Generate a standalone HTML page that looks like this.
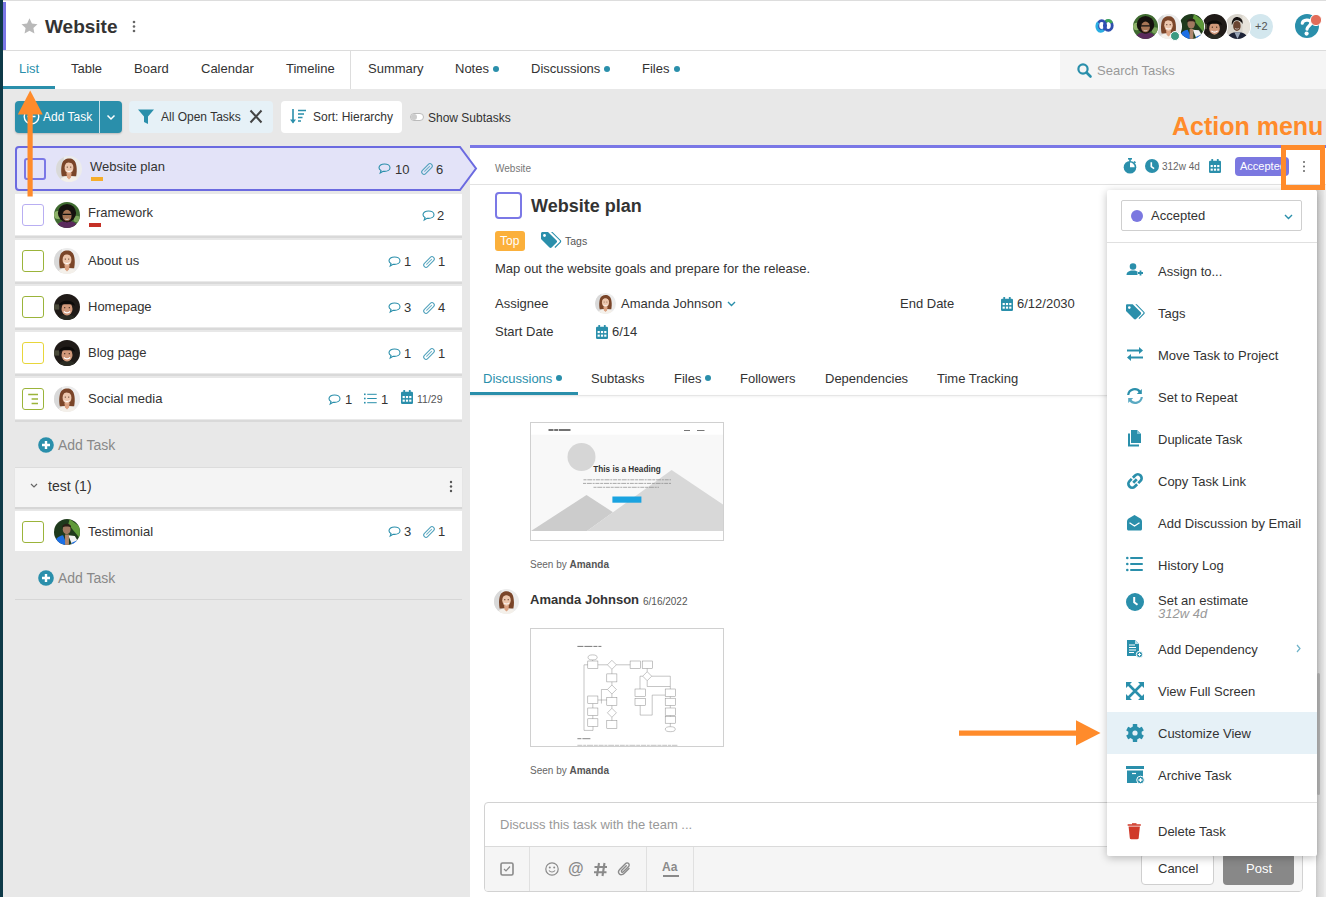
<!DOCTYPE html>
<html><head><meta charset="utf-8">
<style>
*{margin:0;padding:0;box-sizing:border-box}
html,body{width:1326px;height:897px;overflow:hidden;background:#e8e8e8;font-family:"Liberation Sans",sans-serif;color:#333}
.a{position:absolute}
.t{position:absolute;white-space:nowrap;line-height:1}
svg{position:absolute;overflow:visible}
</style></head><body>
<!-- left dark strip -->
<div class="a" style="left:0;top:0;width:3px;height:897px;background:#0e3a48"></div>
<!-- header -->
<div class="a" style="left:3px;top:0;width:1323px;height:51px;background:#fff;border-top:1px solid #ddd;border-bottom:1px solid #dcdcdc"></div>
<div class="a" style="left:3px;top:2px;width:3px;height:48px;background:#7a77e6"></div>
<div class="t" style="left:45px;top:17px;font-size:19px;font-weight:bold;color:#333">Website</div>
<svg style="left:20.5px;top:17.5px" width="17" height="16" viewBox="0 0 24 23"><path d="M12 0.5l3.5 7.4 8 1-5.9 5.5 1.5 8-7.1-3.9-7.1 3.9 1.5-8L0.5 8.9l8-1z" fill="#b9b9b9"/></svg>
<svg style="left:132px;top:20px" width="4" height="13"><circle cx="2" cy="2" r="1.3" fill="#666"/><circle cx="2" cy="6.5" r="1.3" fill="#666"/><circle cx="2" cy="11" r="1.3" fill="#666"/></svg>
<!-- webex logo -->
<svg style="left:1096px;top:19px" width="18" height="13" viewBox="0 0 18 13"><ellipse cx="12.3" cy="6.5" rx="3.9" ry="4.9" fill="none" stroke="#2f4fae" stroke-width="2.9"/><path d="M9.3 3.3A3.9 4.9 0 0 1 15.7 4" fill="none" stroke="#3fa65a" stroke-width="2.9"/><ellipse cx="5.7" cy="6.5" rx="3.9" ry="4.9" fill="none" stroke="#3050b2" stroke-width="2.9"/><path d="M2.2 3.5A3.9 4.9 0 0 0 7.5 11" fill="none" stroke="#2aaee2" stroke-width="2.9"/></svg>
<!-- avatars: in build.py -->
<!-- help -->
<svg style="left:1295px;top:14px" width="27" height="24" viewBox="0 0 27 24"><circle cx="12" cy="12" r="12" fill="#2a8fab"/><path d="M7.3 9.2C8 5.5 15 5 15.8 8.5 16.4 11.4 12.2 12 12 15.2" stroke="#fff" stroke-width="3.2" fill="none" stroke-linecap="round"/><circle cx="11.6" cy="19.6" r="2.1" fill="#fff"/><circle cx="21" cy="6" r="5.6" fill="#e26d5a" stroke="#fff" stroke-width="1"/></svg>

<!-- tabs bar -->
<div class="a" style="left:3px;top:51px;width:1323px;height:38px;background:#fff"></div>
<div class="t" style="left:19px;top:62px;font-size:13px;color:#2a8fab">List</div>
<div class="a" style="left:3px;top:86px;width:52px;height:3px;background:#2a8fab"></div>
<div class="t" style="left:71px;top:62px;font-size:13px">Table</div>
<div class="t" style="left:134px;top:62px;font-size:13px">Board</div>
<div class="t" style="left:201px;top:62px;font-size:13px">Calendar</div>
<div class="t" style="left:286px;top:62px;font-size:13px">Timeline</div>
<div class="a" style="left:350px;top:51px;width:1px;height:38px;background:#ddd"></div>
<div class="t" style="left:368px;top:62px;font-size:13px">Summary</div>
<div class="t" style="left:455px;top:62px;font-size:13px">Notes</div>
<div class="t" style="left:531px;top:62px;font-size:13px">Discussions</div>
<div class="t" style="left:642px;top:62px;font-size:13px">Files</div>
<div class="a" style="left:1060px;top:51px;width:266px;height:38px;background:#f5f5f5"></div>
<div class="t" style="left:1097px;top:64px;font-size:13px;color:#999">Search Tasks</div>

<!-- toolbar -->
<div class="a" style="left:15px;top:101px;width:107px;height:32px;background:#2a8fab;border-radius:4px;box-shadow:0 1px 2px rgba(0,0,0,.2)"></div>
<div class="t" style="left:43px;top:111px;font-size:12px;color:#fff">Add Task</div>
<div class="a" style="left:129px;top:101px;width:144px;height:32px;background:#e6f1f7;border-radius:4px"></div>
<div class="t" style="left:161px;top:111px;font-size:12px">All Open Tasks</div>
<div class="a" style="left:281px;top:101px;width:121px;height:32px;background:#fff;border-radius:4px"></div>
<div class="t" style="left:313px;top:111px;font-size:12px">Sort: Hierarchy</div>
<div class="t" style="left:428px;top:112px;font-size:12px">Show Subtasks</div>

<div class="a" style="left:493px;top:66px;width:6px;height:6px;background:#2a8fab;border-radius:50%"></div>
<div class="a" style="left:604px;top:66px;width:6px;height:6px;background:#2a8fab;border-radius:50%"></div>
<div class="a" style="left:674px;top:66px;width:6px;height:6px;background:#2a8fab;border-radius:50%"></div>
<svg style="left:1077px;top:63px" width="15" height="15" viewBox="0 0 15 15"><circle cx="6" cy="6" r="4.6" fill="none" stroke="#2a8fab" stroke-width="2.2"/><path d="M9.5 9.5l4 4" stroke="#2a8fab" stroke-width="2.6" stroke-linecap="round"/></svg>
<div class="a" style="left:1248px;top:14px;width:25px;height:25px;background:#d3e7ee;border-radius:50%"></div>
<div class="t" style="left:1255px;top:21px;font-size:11px;color:#555;font-weight:normal;">+2</div>
<div class="a" style="left:1224px;top:13px;width:27px;height:27px;background:#fff;border-radius:50%"></div>
<svg style="left:1225px;top:14px" width="25" height="25" viewBox="0 0 40 40"><defs><clipPath id="c1225_14"><circle cx="20" cy="20" r="20"/></clipPath></defs><g clip-path="url(#c1225_14)"><rect width="40" height="40" fill="#d8d4cc"/>
<path d="M28 0h12v40H28z" fill="#e8e4dc"/>
<path d="M3 40c2-8 8-11 17-11s15 3 17 11z" fill="#1f2438"/>
<path d="M15 29l5 11 5-11z" fill="#9aa6b8"/>
<ellipse cx="19" cy="19" rx="6" ry="8" fill="#6a4432"/>
<path d="M11 18c-1-10 5-14 10-13 6 1 8 6 7 11-2-4-5-6-9-6s-6 3-8 8z" fill="#141010"/>
<path d="M16 23c2 1.5 4.5 1.5 6 0" stroke="#eee" stroke-width="1" fill="none"/></g></svg>
<div class="a" style="left:1201px;top:13px;width:27px;height:27px;background:#fff;border-radius:50%"></div>
<svg style="left:1202px;top:14px" width="25" height="25" viewBox="0 0 40 40"><defs><clipPath id="c1202_14"><circle cx="20" cy="20" r="20"/></clipPath></defs><g clip-path="url(#c1202_14)"><rect width="40" height="40" fill="#1f1a17"/>
<rect x="0" y="16" width="8" height="8" fill="#4a4a3a"/>
<path d="M5 40c2-6 8-8 15-8s13 2 15 8z" fill="#2a2a22"/>
<ellipse cx="20" cy="23" rx="8.5" ry="10" fill="#d0987a"/>
<path d="M8 18c0-10 24-10 24 0c-5-3-19-3-24 0z" fill="#0c0a09"/>
<path d="M15 27c2.8 2.5 7.2 2.5 10 0" stroke="#fff" stroke-width="2" fill="none"/>
<circle cx="16.5" cy="21" r=".9" fill="#2a1a10"/><circle cx="23.5" cy="21" r=".9" fill="#2a1a10"/></g></svg>
<div class="a" style="left:1178px;top:13px;width:27px;height:27px;background:#fff;border-radius:50%"></div>
<svg style="left:1179px;top:14px" width="25" height="25" viewBox="0 0 40 40"><defs><clipPath id="c1179_14"><circle cx="20" cy="20" r="20"/></clipPath></defs><g clip-path="url(#c1179_14)"><rect width="40" height="40" fill="#1f3a1c"/>
<path d="M24 0l16 12v18L22 8z" fill="#5f9a3a"/>
<path d="M0 40c1-10 7-14 14-15l6 15z" fill="#1d6fe4"/>
<path d="M22 25l10 1 6 10-10 4z" fill="#f2f2f2"/>
<path d="M28 36l10-4v8H26z" fill="#1d6fe4"/>
<path d="M17 24h6v16h-6z" fill="#b0876d"/>
<ellipse cx="19.5" cy="16" rx="6" ry="7.5" fill="#a07860"/>
<path d="M12.5 13c0-7 14-8 14 0c-3-2-11-2-14 0z" fill="#2a1e16"/></g></svg>
<div class="a" style="left:1155px;top:13px;width:27px;height:27px;background:#fff;border-radius:50%"></div>
<svg style="left:1156px;top:14px" width="25" height="25" viewBox="0 0 40 40"><defs><clipPath id="c1156_14"><circle cx="20" cy="20" r="20"/></clipPath></defs><g clip-path="url(#c1156_14)"><rect width="40" height="40" fill="#ececec"/>
<rect x="0" y="0" width="12" height="40" fill="#d9d9d9"/>
<path d="M9 31C7 22 8 9 13 6c4-3 11-3 14 0 5 3 6 16 4 25z" fill="#7a4529"/>
<path d="M5 40c1-6 6-9 15-9s14 3 15 9z" fill="#f4f0ea"/>
<path d="M16 26h8l-1 7-3 3-3-3z" fill="#dca383"/>
<ellipse cx="20" cy="18" rx="6.8" ry="9" fill="#ecc6ad"/>
<path d="M13 14c1-6 6-8 9-7s5 3 5 7c-2-3-5-4-8-4s-5 2-6 4z" fill="#7a4529"/>
<path d="M16 22.5c2.3 1.8 5.7 1.8 8 0" stroke="#fff" stroke-width="1.5" fill="none"/>
<circle cx="17.3" cy="17" r=".9" fill="#4a2a1a"/><circle cx="22.7" cy="17" r=".9" fill="#4a2a1a"/></g></svg>
<div class="a" style="left:1170px;top:31px;width:10px;height:10px;background:#3a9a82;border-radius:50%;border:1px solid #fff"></div>
<div class="a" style="left:1132px;top:13px;width:27px;height:27px;background:#fff;border-radius:50%"></div>
<svg style="left:1133px;top:14px" width="25" height="25" viewBox="0 0 40 40"><defs><clipPath id="c1133_14"><circle cx="20" cy="20" r="20"/></clipPath></defs><g clip-path="url(#c1133_14)"><rect width="40" height="40" fill="#3f6a30"/>
<circle cx="6" cy="20" r="6" fill="#8fb26a"/><circle cx="35" cy="26" r="5" fill="#7aa35a"/>
<path d="M3 40c2-8 8-11 17-11s15 3 17 11z" fill="#5a2a5c"/>
<ellipse cx="20" cy="17" rx="14" ry="14" fill="#15110e"/>
<ellipse cx="20" cy="21" rx="7" ry="9" fill="#a77555"/>
<path d="M13 19h14" stroke="#111" stroke-width="2"/>
<path d="M14 26c2 4 10 4 12 0v3c-2 3-10 3-12 0z" fill="#2a1d16"/>
<path d="M17 26c1.5 1 4.5 1 6 0" stroke="#eee" stroke-width="1.1" fill="none"/></g></svg>
<div class="a" style="left:99px;top:101px;width:1px;height:32px;background:#bfe0ea"></div>
<svg style="left:23px;top:108px" width="17" height="17" viewBox="0 0 17 17"><circle cx="8.5" cy="8.5" r="7.3" fill="none" stroke="#fff" stroke-width="1.4"/><path d="M8.5 4.5v8M4.5 8.5h8" stroke="#fff" stroke-width="1.6"/></svg>
<svg style="left:106px;top:114px" width="10" height="7"><path d="M1.5 1.5l3.5 3.5 3.5-3.5" stroke="#fff" stroke-width="1.5" fill="none"/></svg>
<svg style="left:138px;top:109px" width="16" height="16" viewBox="0 0 16 16"><path d="M0 0.5h16L10 7.5V15l-4-2V7.5z" fill="#2a8fab"/></svg>
<svg style="left:249px;top:109px" width="14" height="15" viewBox="0 0 14 15"><path d="M1.5 1.5l11 12M12.5 1.5l-11 12" stroke="#444" stroke-width="2"/></svg>
<svg style="left:290px;top:108px" width="17" height="17" viewBox="0 0 17 17"><path d="M3 1v13.5" stroke="#2a8fab" stroke-width="1.6"/><path d="M0 11.5l3 4 3-4z" fill="#2a8fab"/><path d="M8 2.5h8M8 6h6M8 9.5h4.5M8 13h3" stroke="#2a8fab" stroke-width="1.6"/></svg>
<div class="a" style="left:410px;top:113px;width:14px;height:8px;background:#fff;border:1px solid #bbb;border-radius:4px"></div>
<div class="a" style="left:411px;top:114px;width:6px;height:6px;background:#ccc;border-radius:50%"></div>
<div class="a" style="left:470px;top:145px;width:856px;height:752px;background:#fff"></div>
<div class="a" style="left:470px;top:145px;width:856px;height:3px;background:#7a77e6"></div>
<div class="a" style="left:470px;top:184px;width:856px;height:1px;background:#e2e2e2"></div>
<div class="t" style="left:495px;top:164px;font-size:10px;color:#777;font-weight:normal;">Website</div>
<svg style="left:1123px;top:158px" width="14" height="16" viewBox="0 0 14 16"><rect x="5" y="0" width="4" height="1.6" fill="#2a8fab"/><rect x="6.2" y="1" width="1.6" height="2.5" fill="#2a8fab"/><path d="M11 3.5l1.5 1.3" stroke="#2a8fab" stroke-width="1.6"/><circle cx="7" cy="9.3" r="6.3" fill="#2a8fab"/><path d="M7 9.3V4.6A4.7 4.7 0 0 1 11.7 9.3z" fill="#fff"/></svg>
<svg style="left:1145px;top:159px" width="14" height="14" viewBox="0 0 14 14"><circle cx="7" cy="7" r="7" fill="#2a8fab"/><path d="M6.3 3.2v4.5l2.8 2" stroke="#fff" stroke-width="1.6" fill="none"/></svg>
<div class="t" style="left:1162px;top:162px;font-size:10px;color:#666;font-weight:normal;">312w 4d</div>
<svg style="left:1209px;top:159px" width="12" height="14.0" viewBox="0 0 12 14"><rect x="2.3" y="0" width="1.8" height="3" rx=".5" fill="#2a8fab"/><rect x="7.9" y="0" width="1.8" height="3" rx=".5" fill="#2a8fab"/><rect x="0" y="1.8" width="12" height="12.2" rx="1.2" fill="#2a8fab"/><g fill="#fff"><rect x="1.6" y="6" width="2.2" height="2.1"/><rect x="4.9" y="6" width="2.2" height="2.1"/><rect x="8.2" y="6" width="2.2" height="2.1"/><rect x="1.6" y="9.6" width="2.2" height="2.1"/><rect x="4.9" y="9.6" width="2.2" height="2.1"/><rect x="8.2" y="9.6" width="2.2" height="2.1"/></g></svg>
<div class="a" style="left:1235px;top:157px;width:54px;height:19px;background:#7b78e0;border-radius:4px"></div>
<div class="t" style="left:1240px;top:161px;font-size:11px;color:#fff;font-weight:normal;">Accepted</div>
<svg style="left:1302px;top:160px" width="4" height="13"><circle cx="2" cy="2" r="1" fill="#666"/><circle cx="2" cy="6.5" r="1" fill="#666"/><circle cx="2" cy="11" r="1" fill="#666"/></svg>
<div class="a" style="left:495px;top:192px;width:27px;height:27px;border:2px solid #7b78e6;border-radius:4px"></div>
<div class="t" style="left:531px;top:197px;font-size:18px;color:#333;font-weight:bold;">Website plan</div>
<div class="a" style="left:495px;top:231px;width:30px;height:20px;background:#fbb03b;border-radius:3px"></div>
<div class="t" style="left:500px;top:235px;font-size:12px;color:#fff;font-weight:normal;">Top</div>
<svg style="left:541px;top:232px" width="21" height="17" viewBox="0 0 21 17"><path d="M0 1.5V7l8.5 8.5c.6.6 1.5.6 2.1 0l5-5c.6-.6.6-1.5 0-2.1L7 0H1.5C.7 0 0 .7 0 1.5z" fill="#2a8fab"/><circle cx="3.5" cy="3.5" r="1.4" fill="#fff"/><path d="M10 0h1.5l8.3 8.3c.6.6.6 1.5 0 2.1l-5.5 5.5-.8-.8 5.2-5.2c.4-.4.4-.9 0-1.3z" fill="#2a8fab"/></svg>
<div class="t" style="left:565px;top:236px;font-size:10.5px;color:#555;font-weight:normal;">Tags</div>
<div class="t" style="left:495px;top:262px;font-size:13px;color:#333;font-weight:normal;">Map out the website goals and prepare for the release.</div>
<div class="t" style="left:495px;top:297px;font-size:13px;color:#333;font-weight:normal;">Assignee</div>
<svg style="left:595px;top:293px" width="21" height="21" viewBox="0 0 40 40"><defs><clipPath id="c595_293"><circle cx="20" cy="20" r="20"/></clipPath></defs><g clip-path="url(#c595_293)"><rect width="40" height="40" fill="#ececec"/>
<rect x="0" y="0" width="12" height="40" fill="#d9d9d9"/>
<path d="M9 31C7 22 8 9 13 6c4-3 11-3 14 0 5 3 6 16 4 25z" fill="#7a4529"/>
<path d="M5 40c1-6 6-9 15-9s14 3 15 9z" fill="#f4f0ea"/>
<path d="M16 26h8l-1 7-3 3-3-3z" fill="#dca383"/>
<ellipse cx="20" cy="18" rx="6.8" ry="9" fill="#ecc6ad"/>
<path d="M13 14c1-6 6-8 9-7s5 3 5 7c-2-3-5-4-8-4s-5 2-6 4z" fill="#7a4529"/>
<path d="M16 22.5c2.3 1.8 5.7 1.8 8 0" stroke="#fff" stroke-width="1.5" fill="none"/>
<circle cx="17.3" cy="17" r=".9" fill="#4a2a1a"/><circle cx="22.7" cy="17" r=".9" fill="#4a2a1a"/></g></svg>
<div class="t" style="left:621px;top:297px;font-size:13px;color:#333;font-weight:normal;">Amanda Johnson</div>
<svg style="left:727px;top:301px" width="9" height="6"><path d="M1 1l3.5 3.5L8 1" stroke="#2a8fab" stroke-width="1.4" fill="none"/></svg>
<div class="t" style="left:900px;top:297px;font-size:13px;color:#333;font-weight:normal;">End Date</div>
<svg style="left:1001px;top:297px" width="12" height="14.0" viewBox="0 0 12 14"><rect x="2.3" y="0" width="1.8" height="3" rx=".5" fill="#2a8fab"/><rect x="7.9" y="0" width="1.8" height="3" rx=".5" fill="#2a8fab"/><rect x="0" y="1.8" width="12" height="12.2" rx="1.2" fill="#2a8fab"/><g fill="#fff"><rect x="1.6" y="6" width="2.2" height="2.1"/><rect x="4.9" y="6" width="2.2" height="2.1"/><rect x="8.2" y="6" width="2.2" height="2.1"/><rect x="1.6" y="9.6" width="2.2" height="2.1"/><rect x="4.9" y="9.6" width="2.2" height="2.1"/><rect x="8.2" y="9.6" width="2.2" height="2.1"/></g></svg>
<div class="t" style="left:1017px;top:297px;font-size:13px;color:#333;font-weight:normal;">6/12/2030</div>
<div class="t" style="left:495px;top:325px;font-size:13px;color:#333;font-weight:normal;">Start Date</div>
<svg style="left:596px;top:325px" width="12" height="14.0" viewBox="0 0 12 14"><rect x="2.3" y="0" width="1.8" height="3" rx=".5" fill="#2a8fab"/><rect x="7.9" y="0" width="1.8" height="3" rx=".5" fill="#2a8fab"/><rect x="0" y="1.8" width="12" height="12.2" rx="1.2" fill="#2a8fab"/><g fill="#fff"><rect x="1.6" y="6" width="2.2" height="2.1"/><rect x="4.9" y="6" width="2.2" height="2.1"/><rect x="8.2" y="6" width="2.2" height="2.1"/><rect x="1.6" y="9.6" width="2.2" height="2.1"/><rect x="4.9" y="9.6" width="2.2" height="2.1"/><rect x="8.2" y="9.6" width="2.2" height="2.1"/></g></svg>
<div class="t" style="left:612px;top:325px;font-size:13px;color:#333;font-weight:normal;">6/14</div>
<div class="t" style="left:483px;top:372px;font-size:13px;color:#2a8fab;font-weight:normal;">Discussions</div>
<div class="t" style="left:591px;top:372px;font-size:13px;color:#333;font-weight:normal;">Subtasks</div>
<div class="t" style="left:674px;top:372px;font-size:13px;color:#333;font-weight:normal;">Files</div>
<div class="t" style="left:740px;top:372px;font-size:13px;color:#333;font-weight:normal;">Followers</div>
<div class="t" style="left:825px;top:372px;font-size:13px;color:#333;font-weight:normal;">Dependencies</div>
<div class="t" style="left:937px;top:372px;font-size:13px;color:#333;font-weight:normal;">Time Tracking</div>
<div class="a" style="left:556px;top:375px;width:6px;height:6px;background:#2a8fab;border-radius:50%"></div>
<div class="a" style="left:705px;top:375px;width:6px;height:6px;background:#2a8fab;border-radius:50%"></div>
<div class="a" style="left:470px;top:395px;width:856px;height:1px;background:#e6e6e6;box-shadow:0 1px 2px rgba(0,0,0,.08)"></div>
<div class="a" style="left:470px;top:392px;width:108px;height:3px;background:#2a8fab"></div>
<div class="a" style="left:530px;top:422px;width:194px;height:119px;background:#fff;border:1px solid #d0d0d0"></div>
<svg style="left:531px;top:423px" width="192" height="117" viewBox="0 0 192 117">
<rect x="0" y="11.7" width="192" height="96" fill="#f8f8f8"/>
<path d="M17.5 7h22" stroke="#444" stroke-width="1.6" stroke-dasharray="5 .7 4 .7 12 30"/>
<path d="M153 7.5h6M166 7.5h7.5" stroke="#666" stroke-width=".9"/>
<circle cx="50.5" cy="34" r="14" fill="#d6d6d6"/>
<path d="M0 108L55.5 72L82 89.2L56 108Z" fill="#cccccc"/>
<path d="M56 108L140.6 47L192 81.6V108Z" fill="#d8d8d8"/>
<text x="96" y="48.5" font-size="8.2" font-family="Liberation Sans" font-weight="bold" text-anchor="middle" fill="#333">This is a Heading</text>
<path d="M52.5 56.8h87.5M52 60.4h88M62.5 64.3h65.5" stroke="#888" stroke-width=".7" stroke-dasharray="3 .8 5 .8 2 .8 4 .8"/>
<rect x="81.4" y="73.5" width="29" height="6.2" fill="#1aa3e0"/>
</svg>
<div class="t" style="left:530px;top:560px;font-size:10px;color:#666;font-weight:normal;">Seen by <b style="color:#555">Amanda</b></div>
<svg style="left:494px;top:589px" width="25" height="25" viewBox="0 0 40 40"><defs><clipPath id="c494_589"><circle cx="20" cy="20" r="20"/></clipPath></defs><g clip-path="url(#c494_589)"><rect width="40" height="40" fill="#ececec"/>
<rect x="0" y="0" width="12" height="40" fill="#d9d9d9"/>
<path d="M9 31C7 22 8 9 13 6c4-3 11-3 14 0 5 3 6 16 4 25z" fill="#7a4529"/>
<path d="M5 40c1-6 6-9 15-9s14 3 15 9z" fill="#f4f0ea"/>
<path d="M16 26h8l-1 7-3 3-3-3z" fill="#dca383"/>
<ellipse cx="20" cy="18" rx="6.8" ry="9" fill="#ecc6ad"/>
<path d="M13 14c1-6 6-8 9-7s5 3 5 7c-2-3-5-4-8-4s-5 2-6 4z" fill="#7a4529"/>
<path d="M16 22.5c2.3 1.8 5.7 1.8 8 0" stroke="#fff" stroke-width="1.5" fill="none"/>
<circle cx="17.3" cy="17" r=".9" fill="#4a2a1a"/><circle cx="22.7" cy="17" r=".9" fill="#4a2a1a"/></g></svg>
<div class="t" style="left:530px;top:593px;font-size:13px;color:#333;font-weight:bold;">Amanda Johnson</div>
<div class="t" style="left:643px;top:597px;font-size:10px;color:#555;font-weight:normal;">6/16/2022</div>
<div class="a" style="left:530px;top:628px;width:194px;height:119px;background:#fff;border:1px solid #d0d0d0"></div>
<svg style="left:531px;top:629px" width="192" height="117" viewBox="0 0 192 117" fill="none" stroke="#8a8a8a" stroke-width=".5">
<path d="M46.4 17.4h30" stroke="#555" stroke-width=".8" stroke-dasharray="6 1 8 1 4 1 3"/>
<ellipse cx="61.6" cy="28.4" rx="4.6" ry="2.5"/>
<path d="M61.6 30.9V32"/>
<rect x="56.8" y="32" width="10.1" height="7.6"/>
<path d="M80.9 31.3l4.5 4.5-4.5 4.5-4.5-4.5z"/>
<path d="M66.9 35.8h9.5M85.4 35.8h13.7"/>
<rect x="99.1" y="32" width="10.3" height="7.6"/><rect x="111.2" y="32" width="10.1" height="7.6"/>
<path d="M116.2 39.6v3.1"/><path d="M116.2 42.7l4.5 4.5-4.5 4.5-4.5-4.5z"/>
<path d="M80.9 40.3v4.6"/>
<rect x="75.8" y="44.9" width="10.1" height="8"/><path d="M80.9 52.9v3.1"/>
<path d="M80.9 56l4.5 4.5-4.5 4.5-4.5-4.5z"/><path d="M80.9 65v3.6"/>
<rect x="75.8" y="68.6" width="10.1" height="8"/><path d="M80.9 76.6v2.7"/>
<path d="M80.9 79.3l4.5 4.5-4.5 4.5-4.5-4.5z"/><path d="M80.9 88.3v3.4"/>
<rect x="75.8" y="91.7" width="10.1" height="7.8"/>
<rect x="56.8" y="67" width="10.1" height="7.7"/><rect x="56.8" y="79" width="10.1" height="7.6"/><rect x="56.8" y="89.8" width="10.1" height="7.6"/>
<path d="M61.8 74.7v4.3M61.8 86.6v3.2"/>
<path d="M56.8 35.8H53v65.6h9V97.4"/>
<path d="M76.4 60.5h-6v14M66.9 71h9"/>
<path d="M111.7 47.2H109v12.8M120.7 47.2h18.6V60"/>
<rect x="104" y="60" width="10.3" height="7.6"/><rect x="104" y="69.5" width="10.3" height="7.1"/>
<path d="M109.2 76.6v9.5h12v-20h13"/>
<path d="M116.2 51.7v5.8h23"/>
<rect x="134.2" y="60" width="10.2" height="7.6"/><rect x="134.2" y="69.2" width="10.2" height="7.4"/><rect x="134.2" y="79" width="10.2" height="7.6"/><rect x="134.2" y="87.5" width="10.2" height="6.7"/>
<path d="M139.3 67.6v1.6M139.3 76.6v2.4M139.3 86.6v.9M139.3 94.2v3.5"/>
<ellipse cx="139.3" cy="100.2" rx="5" ry="2.5"/>
<path d="M46.4 109.7h13" stroke="#555" stroke-width=".7" stroke-dasharray="4 1 8"/>
<path d="M46.4 116.3h100" stroke="#999" stroke-width=".6" stroke-dasharray="5 .8 3 .8 6 .8 4 .8"/>
</svg>
<div class="t" style="left:530px;top:766px;font-size:10px;color:#666;font-weight:normal;">Seen by <b style="color:#555">Amanda</b></div>
<div class="a" style="left:484px;top:802px;width:819px;height:90px;background:#fff;border:1px solid #d2d2d2;border-radius:4px"></div>
<div class="a" style="left:485px;top:846px;width:817px;height:45px;background:#f5f5f5;border-top:1px solid #dadada;border-radius:0 0 3px 3px"></div>
<div class="t" style="left:500px;top:818px;font-size:13px;color:#999;font-weight:normal;">Discuss this task with the team ...</div>
<div class="a" style="left:529px;top:847px;width:1px;height:44px;background:#e0e0e0"></div>
<div class="a" style="left:646px;top:847px;width:1px;height:44px;background:#e0e0e0"></div>
<div class="a" style="left:693px;top:847px;width:1px;height:44px;background:#e0e0e0"></div>
<svg style="left:500px;top:862px" width="14" height="14" viewBox="0 0 14 14"><rect x="1" y="1" width="12" height="12" rx="1.5" fill="none" stroke="#8a8a8a" stroke-width="1.6"/><path d="M4 7l2 2 4-4.5" stroke="#8a8a8a" stroke-width="1.2" fill="none"/></svg>
<svg style="left:545px;top:862px" width="14" height="14" viewBox="0 0 14 14"><circle cx="7" cy="7" r="6.2" fill="none" stroke="#8a8a8a" stroke-width="1.2"/><circle cx="4.8" cy="5.5" r="1" fill="#8a8a8a"/><circle cx="9.2" cy="5.5" r="1" fill="#8a8a8a"/><path d="M4 8.5c1.5 2 4.5 2 6 0" stroke="#8a8a8a" stroke-width="1.2" fill="none"/></svg>
<div class="t" style="left:568px;top:861px;font-size:16px;color:#8a8a8a;font-weight:bold;">@</div>
<svg style="left:593px;top:862px" width="15" height="15" viewBox="0 0 15 15"><path d="M6 1L4 14M11.5 1L9.5 14M1.5 5h12.5M1 10.2h12.5" stroke="#8a8a8a" stroke-width="2.1"/></svg>
<svg style="left:618px;top:862px" width="13" height="14" viewBox="0 0 13 14"><path d="M11 6.5L6 11.5c-1.5 1.5-3.5 1.5-4.6.4S.4 8.7 1.9 7.2L7.4 1.7c1-1 2.4-1 3.2-.2s.8 2.2-.2 3.2L5.3 9.8c-.5.5-1.2.5-1.6.1s-.4-1.1.1-1.6L8.3 3.8" stroke="#8a8a8a" stroke-width="1.4" fill="none" stroke-linecap="round"/></svg>
<div class="t" style="left:662px;top:861px;font-size:12px;color:#8a8a8a;font-weight:bold;">Aa</div>
<div class="a" style="left:663px;top:875px;width:16px;height:2px;background:#8a8a8a"></div>
<div class="a" style="left:1141px;top:853px;width:73px;height:32px;background:#fff;border:1px solid #cfcfcf;border-radius:4px"></div>
<div class="t" style="left:1158px;top:862px;font-size:13px;color:#333;font-weight:normal;">Cancel</div>
<div class="a" style="left:1223px;top:853px;width:71px;height:32px;background:#888;border-radius:4px"></div>
<div class="t" style="left:1246px;top:862px;font-size:13px;color:#fff;font-weight:normal;">Post</div>
<div class="a" style="left:1316px;top:190px;width:10px;height:707px;background:linear-gradient(90deg,#c9c9c9 0,#dadada 30%,#e6e6e6 75%,#d4d4d4 78%,#ececec 85%,#efefef 100%)"></div>
<div class="a" style="left:1316px;top:185px;width:10px;height:5px;background:#f4f4f4"></div>
<div class="a" style="left:1317px;top:673px;width:3px;height:122px;background:#b5b5b5;border-radius:2px"></div>
<svg style="left:15px;top:146px" width="463" height="45" viewBox="0 0 463 45"><path d="M4 1H445L461 22.5L445 44H4Q1 44 1 41V4Q1 1 4 1z" fill="#e3e3f8" stroke="#6b6ae0" stroke-width="2"/></svg>
<div class="a" style="left:24px;top:158px;width:22px;height:22px;border:2px solid #7b78e6;border-radius:3px"></div>
<svg style="left:56px;top:156px" width="26" height="26" viewBox="0 0 40 40"><defs><clipPath id="c56_156"><circle cx="20" cy="20" r="20"/></clipPath></defs><g clip-path="url(#c56_156)"><rect width="40" height="40" fill="#ececec"/>
<rect x="0" y="0" width="12" height="40" fill="#d9d9d9"/>
<path d="M9 31C7 22 8 9 13 6c4-3 11-3 14 0 5 3 6 16 4 25z" fill="#7a4529"/>
<path d="M5 40c1-6 6-9 15-9s14 3 15 9z" fill="#f4f0ea"/>
<path d="M16 26h8l-1 7-3 3-3-3z" fill="#dca383"/>
<ellipse cx="20" cy="18" rx="6.8" ry="9" fill="#ecc6ad"/>
<path d="M13 14c1-6 6-8 9-7s5 3 5 7c-2-3-5-4-8-4s-5 2-6 4z" fill="#7a4529"/>
<path d="M16 22.5c2.3 1.8 5.7 1.8 8 0" stroke="#fff" stroke-width="1.5" fill="none"/>
<circle cx="17.3" cy="17" r=".9" fill="#4a2a1a"/><circle cx="22.7" cy="17" r=".9" fill="#4a2a1a"/></g></svg>
<div class="t" style="left:90px;top:160px;font-size:13px;color:#333;font-weight:normal;">Website plan</div>
<div class="a" style="left:91px;top:177px;width:12px;height:4px;background:#f5ad2b"></div>
<svg style="left:378px;top:163px" width="13" height="11" viewBox="0 0 13 11"><path d="M6.5 1C3.4 1 1 2.6 1 4.7c0 1.2.8 2.2 2 2.9L2.2 10l2.9-1.7c.4.1.9.1 1.4.1 3.1 0 5.5-1.6 5.5-3.7S9.6 1 6.5 1z" fill="none" stroke="#2a8fab" stroke-width="1.1"/></svg>
<div class="t" style="left:395px;top:163px;font-size:13px;color:#333;font-weight:normal;">10</div>
<svg style="left:421px;top:163px" width="12" height="12" viewBox="0 0 12 12"><g transform="rotate(-45 6 6)"><rect x="-0.5" y="3.7" width="13" height="4.6" rx="2.3" fill="none" stroke="#4c9fba" stroke-width="1"/><path d="M2.2 6H10" stroke="#6fb3c9" stroke-width="1"/></g></svg>
<div class="t" style="left:436px;top:163px;font-size:13px;color:#333;font-weight:normal;">6</div>
<div class="a" style="left:15px;top:194px;width:447px;height:41px;background:#fff;box-shadow:0 1px 0 #e9e9e9, 0 3px 0 #d9d9d9"></div>
<div class="a" style="left:22px;top:204px;width:22px;height:22px;border:1.5px solid #b8aef2;border-radius:3px"></div>
<svg style="left:54px;top:202px" width="26" height="26" viewBox="0 0 40 40"><defs><clipPath id="c54_202"><circle cx="20" cy="20" r="20"/></clipPath></defs><g clip-path="url(#c54_202)"><rect width="40" height="40" fill="#3f6a30"/>
<circle cx="6" cy="20" r="6" fill="#8fb26a"/><circle cx="35" cy="26" r="5" fill="#7aa35a"/>
<path d="M3 40c2-8 8-11 17-11s15 3 17 11z" fill="#5a2a5c"/>
<ellipse cx="20" cy="17" rx="14" ry="14" fill="#15110e"/>
<ellipse cx="20" cy="21" rx="7" ry="9" fill="#a77555"/>
<path d="M13 19h14" stroke="#111" stroke-width="2"/>
<path d="M14 26c2 4 10 4 12 0v3c-2 3-10 3-12 0z" fill="#2a1d16"/>
<path d="M17 26c1.5 1 4.5 1 6 0" stroke="#eee" stroke-width="1.1" fill="none"/></g></svg>
<div class="t" style="left:88px;top:206px;font-size:13px;color:#333;font-weight:normal;">Framework</div>
<div class="a" style="left:89px;top:223px;width:12px;height:4px;background:#c53026"></div>
<svg style="left:422px;top:210px" width="13" height="11" viewBox="0 0 13 11"><path d="M6.5 1C3.4 1 1 2.6 1 4.7c0 1.2.8 2.2 2 2.9L2.2 10l2.9-1.7c.4.1.9.1 1.4.1 3.1 0 5.5-1.6 5.5-3.7S9.6 1 6.5 1z" fill="none" stroke="#2a8fab" stroke-width="1.1"/></svg>
<div class="t" style="left:437px;top:209px;font-size:13px;color:#333;font-weight:normal;">2</div>
<div class="a" style="left:15px;top:240px;width:447px;height:41px;background:#fff;box-shadow:0 1px 0 #e9e9e9, 0 3px 0 #d9d9d9"></div>
<div class="a" style="left:22px;top:250px;width:22px;height:22px;border:1.5px solid #9bb43a;border-radius:3px"></div>
<svg style="left:54px;top:248px" width="26" height="26" viewBox="0 0 40 40"><defs><clipPath id="c54_248"><circle cx="20" cy="20" r="20"/></clipPath></defs><g clip-path="url(#c54_248)"><rect width="40" height="40" fill="#ececec"/>
<rect x="0" y="0" width="12" height="40" fill="#d9d9d9"/>
<path d="M9 31C7 22 8 9 13 6c4-3 11-3 14 0 5 3 6 16 4 25z" fill="#7a4529"/>
<path d="M5 40c1-6 6-9 15-9s14 3 15 9z" fill="#f4f0ea"/>
<path d="M16 26h8l-1 7-3 3-3-3z" fill="#dca383"/>
<ellipse cx="20" cy="18" rx="6.8" ry="9" fill="#ecc6ad"/>
<path d="M13 14c1-6 6-8 9-7s5 3 5 7c-2-3-5-4-8-4s-5 2-6 4z" fill="#7a4529"/>
<path d="M16 22.5c2.3 1.8 5.7 1.8 8 0" stroke="#fff" stroke-width="1.5" fill="none"/>
<circle cx="17.3" cy="17" r=".9" fill="#4a2a1a"/><circle cx="22.7" cy="17" r=".9" fill="#4a2a1a"/></g></svg>
<div class="t" style="left:88px;top:254px;font-size:13px;color:#333;font-weight:normal;">About us</div>
<svg style="left:388px;top:256px" width="13" height="11" viewBox="0 0 13 11"><path d="M6.5 1C3.4 1 1 2.6 1 4.7c0 1.2.8 2.2 2 2.9L2.2 10l2.9-1.7c.4.1.9.1 1.4.1 3.1 0 5.5-1.6 5.5-3.7S9.6 1 6.5 1z" fill="none" stroke="#2a8fab" stroke-width="1.1"/></svg>
<div class="t" style="left:404px;top:255px;font-size:13px;color:#333;font-weight:normal;">1</div>
<svg style="left:423px;top:256px" width="12" height="12" viewBox="0 0 12 12"><g transform="rotate(-45 6 6)"><rect x="-0.5" y="3.7" width="13" height="4.6" rx="2.3" fill="none" stroke="#4c9fba" stroke-width="1"/><path d="M2.2 6H10" stroke="#6fb3c9" stroke-width="1"/></g></svg>
<div class="t" style="left:438px;top:255px;font-size:13px;color:#333;font-weight:normal;">1</div>
<div class="a" style="left:15px;top:286px;width:447px;height:41px;background:#fff;box-shadow:0 1px 0 #e9e9e9, 0 3px 0 #d9d9d9"></div>
<div class="a" style="left:22px;top:296px;width:22px;height:22px;border:1.5px solid #9bb43a;border-radius:3px"></div>
<svg style="left:54px;top:294px" width="26" height="26" viewBox="0 0 40 40"><defs><clipPath id="c54_294"><circle cx="20" cy="20" r="20"/></clipPath></defs><g clip-path="url(#c54_294)"><rect width="40" height="40" fill="#1f1a17"/>
<rect x="0" y="16" width="8" height="8" fill="#4a4a3a"/>
<path d="M5 40c2-6 8-8 15-8s13 2 15 8z" fill="#2a2a22"/>
<ellipse cx="20" cy="23" rx="8.5" ry="10" fill="#d0987a"/>
<path d="M8 18c0-10 24-10 24 0c-5-3-19-3-24 0z" fill="#0c0a09"/>
<path d="M15 27c2.8 2.5 7.2 2.5 10 0" stroke="#fff" stroke-width="2" fill="none"/>
<circle cx="16.5" cy="21" r=".9" fill="#2a1a10"/><circle cx="23.5" cy="21" r=".9" fill="#2a1a10"/></g></svg>
<div class="t" style="left:88px;top:300px;font-size:13px;color:#333;font-weight:normal;">Homepage</div>
<svg style="left:388px;top:302px" width="13" height="11" viewBox="0 0 13 11"><path d="M6.5 1C3.4 1 1 2.6 1 4.7c0 1.2.8 2.2 2 2.9L2.2 10l2.9-1.7c.4.1.9.1 1.4.1 3.1 0 5.5-1.6 5.5-3.7S9.6 1 6.5 1z" fill="none" stroke="#2a8fab" stroke-width="1.1"/></svg>
<div class="t" style="left:404px;top:301px;font-size:13px;color:#333;font-weight:normal;">3</div>
<svg style="left:423px;top:302px" width="12" height="12" viewBox="0 0 12 12"><g transform="rotate(-45 6 6)"><rect x="-0.5" y="3.7" width="13" height="4.6" rx="2.3" fill="none" stroke="#4c9fba" stroke-width="1"/><path d="M2.2 6H10" stroke="#6fb3c9" stroke-width="1"/></g></svg>
<div class="t" style="left:438px;top:301px;font-size:13px;color:#333;font-weight:normal;">4</div>
<div class="a" style="left:15px;top:332px;width:447px;height:41px;background:#fff;box-shadow:0 1px 0 #e9e9e9, 0 3px 0 #d9d9d9"></div>
<div class="a" style="left:22px;top:342px;width:22px;height:22px;border:1.5px solid #e8d63a;border-radius:3px"></div>
<svg style="left:54px;top:340px" width="26" height="26" viewBox="0 0 40 40"><defs><clipPath id="c54_340"><circle cx="20" cy="20" r="20"/></clipPath></defs><g clip-path="url(#c54_340)"><rect width="40" height="40" fill="#1f1a17"/>
<rect x="0" y="16" width="8" height="8" fill="#4a4a3a"/>
<path d="M5 40c2-6 8-8 15-8s13 2 15 8z" fill="#2a2a22"/>
<ellipse cx="20" cy="23" rx="8.5" ry="10" fill="#d0987a"/>
<path d="M8 18c0-10 24-10 24 0c-5-3-19-3-24 0z" fill="#0c0a09"/>
<path d="M15 27c2.8 2.5 7.2 2.5 10 0" stroke="#fff" stroke-width="2" fill="none"/>
<circle cx="16.5" cy="21" r=".9" fill="#2a1a10"/><circle cx="23.5" cy="21" r=".9" fill="#2a1a10"/></g></svg>
<div class="t" style="left:88px;top:346px;font-size:13px;color:#333;font-weight:normal;">Blog page</div>
<svg style="left:388px;top:348px" width="13" height="11" viewBox="0 0 13 11"><path d="M6.5 1C3.4 1 1 2.6 1 4.7c0 1.2.8 2.2 2 2.9L2.2 10l2.9-1.7c.4.1.9.1 1.4.1 3.1 0 5.5-1.6 5.5-3.7S9.6 1 6.5 1z" fill="none" stroke="#2a8fab" stroke-width="1.1"/></svg>
<div class="t" style="left:404px;top:347px;font-size:13px;color:#333;font-weight:normal;">1</div>
<svg style="left:423px;top:348px" width="12" height="12" viewBox="0 0 12 12"><g transform="rotate(-45 6 6)"><rect x="-0.5" y="3.7" width="13" height="4.6" rx="2.3" fill="none" stroke="#4c9fba" stroke-width="1"/><path d="M2.2 6H10" stroke="#6fb3c9" stroke-width="1"/></g></svg>
<div class="t" style="left:438px;top:347px;font-size:13px;color:#333;font-weight:normal;">1</div>
<div class="a" style="left:15px;top:378px;width:447px;height:41px;background:#fff;box-shadow:0 1px 0 #e9e9e9, 0 3px 0 #d9d9d9"></div>
<div class="a" style="left:22px;top:388px;width:22px;height:22px;border:1.5px solid #9bb43a;border-radius:3px"></div>
<svg style="left:54px;top:386px" width="26" height="26" viewBox="0 0 40 40"><defs><clipPath id="c54_386"><circle cx="20" cy="20" r="20"/></clipPath></defs><g clip-path="url(#c54_386)"><rect width="40" height="40" fill="#ececec"/>
<rect x="0" y="0" width="12" height="40" fill="#d9d9d9"/>
<path d="M9 31C7 22 8 9 13 6c4-3 11-3 14 0 5 3 6 16 4 25z" fill="#7a4529"/>
<path d="M5 40c1-6 6-9 15-9s14 3 15 9z" fill="#f4f0ea"/>
<path d="M16 26h8l-1 7-3 3-3-3z" fill="#dca383"/>
<ellipse cx="20" cy="18" rx="6.8" ry="9" fill="#ecc6ad"/>
<path d="M13 14c1-6 6-8 9-7s5 3 5 7c-2-3-5-4-8-4s-5 2-6 4z" fill="#7a4529"/>
<path d="M16 22.5c2.3 1.8 5.7 1.8 8 0" stroke="#fff" stroke-width="1.5" fill="none"/>
<circle cx="17.3" cy="17" r=".9" fill="#4a2a1a"/><circle cx="22.7" cy="17" r=".9" fill="#4a2a1a"/></g></svg>
<div class="t" style="left:88px;top:392px;font-size:13px;color:#333;font-weight:normal;">Social media</div>
<svg style="left:22px;top:388px" width="22" height="22"><path d="M6.2 6.5h9.8M9.6 11h6.4M9.6 15.5h6.4" stroke="#9bb43a" stroke-width="1.3"/></svg>
<svg style="left:328px;top:394px" width="13" height="11" viewBox="0 0 13 11"><path d="M6.5 1C3.4 1 1 2.6 1 4.7c0 1.2.8 2.2 2 2.9L2.2 10l2.9-1.7c.4.1.9.1 1.4.1 3.1 0 5.5-1.6 5.5-3.7S9.6 1 6.5 1z" fill="none" stroke="#2a8fab" stroke-width="1.1"/></svg>
<div class="t" style="left:345px;top:393px;font-size:13px;color:#333;font-weight:normal;">1</div>
<svg style="left:364px;top:393px" width="13" height="11" viewBox="0 0 13 11"><g fill="#2a8fab"><rect x="0" y="0.5" width="1.6" height="1.6"/><rect x="0" y="4.7" width="1.6" height="1.6"/><rect x="0" y="8.9" width="1.6" height="1.6"/><rect x="3.2" y="0.8" width="9.5" height="1"/><rect x="3.2" y="5" width="9.5" height="1"/><rect x="3.2" y="9.2" width="9.5" height="1"/></g></svg>
<div class="t" style="left:381px;top:393px;font-size:13px;color:#333;font-weight:normal;">1</div>
<svg style="left:401px;top:390px" width="12" height="14.0" viewBox="0 0 12 14"><rect x="2.3" y="0" width="1.8" height="3" rx=".5" fill="#2a8fab"/><rect x="7.9" y="0" width="1.8" height="3" rx=".5" fill="#2a8fab"/><rect x="0" y="1.8" width="12" height="12.2" rx="1.2" fill="#2a8fab"/><g fill="#fff"><rect x="1.6" y="6" width="2.2" height="2.1"/><rect x="4.9" y="6" width="2.2" height="2.1"/><rect x="8.2" y="6" width="2.2" height="2.1"/><rect x="1.6" y="9.6" width="2.2" height="2.1"/><rect x="4.9" y="9.6" width="2.2" height="2.1"/><rect x="8.2" y="9.6" width="2.2" height="2.1"/></g></svg>
<div class="t" style="left:417px;top:394px;font-size:10.5px;color:#555;font-weight:normal;">11/29</div>
<svg style="left:38px;top:437px" width="16" height="16" viewBox="0 0 16 16"><circle cx="8" cy="8" r="7.8" fill="#2a8fab"/><path d="M8 4v8M4 8h8" stroke="#fff" stroke-width="2.4"/></svg><div class="t" style="left:58px;top:438px;font-size:14px;color:#888;font-weight:normal;">Add Task</div>
<div class="a" style="left:15px;top:467px;width:447px;height:40px;background:#f4f4f4;border-top:1px solid #dcdcdc;box-shadow:0 2px 1px #d6d6d6"></div>
<svg style="left:30px;top:483px" width="8" height="6"><path d="M1 1l3 3 3-3" stroke="#666" stroke-width="1.2" fill="none"/></svg>
<div class="t" style="left:48px;top:479px;font-size:14px;color:#333;font-weight:normal;">test (1)</div>
<svg style="left:449px;top:480px" width="4" height="13"><circle cx="2" cy="2" r="1.2" fill="#555"/><circle cx="2" cy="6.5" r="1.2" fill="#555"/><circle cx="2" cy="11" r="1.2" fill="#555"/></svg>
<div class="a" style="left:15px;top:511px;width:447px;height:40px;background:#fff"></div>
<div class="a" style="left:22px;top:521px;width:22px;height:22px;border:1.5px solid #9bb43a;border-radius:3px"></div>
<svg style="left:54px;top:519px" width="26" height="26" viewBox="0 0 40 40"><defs><clipPath id="c54_519"><circle cx="20" cy="20" r="20"/></clipPath></defs><g clip-path="url(#c54_519)"><rect width="40" height="40" fill="#1f3a1c"/>
<path d="M24 0l16 12v18L22 8z" fill="#5f9a3a"/>
<path d="M0 40c1-10 7-14 14-15l6 15z" fill="#1d6fe4"/>
<path d="M22 25l10 1 6 10-10 4z" fill="#f2f2f2"/>
<path d="M28 36l10-4v8H26z" fill="#1d6fe4"/>
<path d="M17 24h6v16h-6z" fill="#b0876d"/>
<ellipse cx="19.5" cy="16" rx="6" ry="7.5" fill="#a07860"/>
<path d="M12.5 13c0-7 14-8 14 0c-3-2-11-2-14 0z" fill="#2a1e16"/></g></svg>
<div class="t" style="left:88px;top:525px;font-size:13px;color:#333;font-weight:normal;">Testimonial</div>
<svg style="left:388px;top:526px" width="13" height="11" viewBox="0 0 13 11"><path d="M6.5 1C3.4 1 1 2.6 1 4.7c0 1.2.8 2.2 2 2.9L2.2 10l2.9-1.7c.4.1.9.1 1.4.1 3.1 0 5.5-1.6 5.5-3.7S9.6 1 6.5 1z" fill="none" stroke="#2a8fab" stroke-width="1.1"/></svg>
<div class="t" style="left:404px;top:525px;font-size:13px;color:#333;font-weight:normal;">3</div>
<svg style="left:423px;top:526px" width="12" height="12" viewBox="0 0 12 12"><g transform="rotate(-45 6 6)"><rect x="-0.5" y="3.7" width="13" height="4.6" rx="2.3" fill="none" stroke="#4c9fba" stroke-width="1"/><path d="M2.2 6H10" stroke="#6fb3c9" stroke-width="1"/></g></svg>
<div class="t" style="left:438px;top:525px;font-size:13px;color:#333;font-weight:normal;">1</div>
<svg style="left:38px;top:570px" width="16" height="16" viewBox="0 0 16 16"><circle cx="8" cy="8" r="7.8" fill="#2a8fab"/><path d="M8 4v8M4 8h8" stroke="#fff" stroke-width="2.4"/></svg><div class="t" style="left:58px;top:571px;font-size:14px;color:#888;font-weight:normal;">Add Task</div>
<div class="a" style="left:15px;top:599px;width:447px;height:1px;background:#d6d6d6"></div>
<div class="a" style="left:1107px;top:190px;width:210px;height:666px;background:#fff;box-shadow:0 2px 8px rgba(0,0,0,.25);border-radius:2px"></div>
<div class="a" style="left:1121px;top:200px;width:181px;height:31px;background:#fff;border:1px solid #cfcfcf;border-radius:2px"></div>
<div class="a" style="left:1131px;top:210px;width:12px;height:12px;background:#7b78e0;border-radius:50%"></div>
<div class="t" style="left:1151px;top:209px;font-size:13px;color:#333;font-weight:normal;">Accepted</div>
<svg style="left:1284px;top:214px" width="9" height="6"><path d="M1 1l3.5 3.5L8 1" stroke="#2a8fab" stroke-width="1.4" fill="none"/></svg>
<div class="a" style="left:1107px;top:242px;width:210px;height:1px;background:#e0e0e0"></div>
<div class="a" style="left:1107px;top:712px;width:210px;height:42px;background:#e6f1f7"></div>
<div class="a" style="left:1107px;top:802px;width:210px;height:1px;background:#e0e0e0"></div>
<svg style="left:1126px;top:262px" width="18" height="18" viewBox="0 0 18 18"><path d="M7 1.2a3.3 3.3 0 1 1 0 6.6 3.3 3.3 0 0 1 0-6.6z" fill="#2a8fab"/><path d="M.5 13c0-3 2.5-4.5 6.5-4.5 2 0 3.5.4 4.5 1.1V13z" fill="#2a8fab"/><path d="M14.5 8.5v5M12 11h5" stroke="#2a8fab" stroke-width="1.8"/></svg>
<div class="t" style="left:1158px;top:265px;font-size:13px;color:#333;font-weight:normal;">Assign to...</div>
<svg style="left:1126px;top:304px" width="18" height="18" viewBox="0 0 18 18"><path d="M0 1.5V7l8 8c.6.6 1.5.6 2.1 0l4.6-4.6c.6-.6.6-1.5 0-2.1L6.7.3H1.2C.5.3 0 .8 0 1.5z" fill="#2a8fab"/><circle cx="3.3" cy="3.6" r="1.3" fill="#fff"/><path d="M9.3.3h1.5l7.5 7.7c.6.6.6 1.5 0 2.1l-5 5-.8-.8 4.7-4.8c.4-.4.4-.9 0-1.3z" fill="#2a8fab"/></svg>
<div class="t" style="left:1158px;top:307px;font-size:13px;color:#333;font-weight:normal;">Tags</div>
<svg style="left:1126px;top:346px" width="18" height="18" viewBox="0 0 18 18"><path d="M1 4.5h13" stroke="#2a8fab" stroke-width="2"/><path d="M13 1l4 3.5-4 3.5z" fill="#2a8fab"/><path d="M4 11.5h13" stroke="#2a8fab" stroke-width="2"/><path d="M5 8l-4 3.5 4 3.5z" fill="#2a8fab"/></svg>
<div class="t" style="left:1158px;top:349px;font-size:13px;color:#333;font-weight:normal;">Move Task to Project</div>
<svg style="left:1126px;top:388px" width="18" height="18" viewBox="0 0 18 18"><path d="M2.2 7A6.5 6.5 0 0 1 14 4" stroke="#2a8fab" stroke-width="2.2" fill="none"/><path d="M15.8 1v5h-5z" fill="#2a8fab"/><path d="M15.8 9A6.5 6.5 0 0 1 4 12" stroke="#5aa9c2" stroke-width="2.2" fill="none"/><path d="M2.2 15v-5h5z" fill="#5aa9c2"/></svg>
<div class="t" style="left:1158px;top:391px;font-size:13px;color:#333;font-weight:normal;">Set to Repeat</div>
<svg style="left:1126px;top:430px" width="18" height="18" viewBox="0 0 18 18"><path d="M5 0h6l4 4v9H5z" fill="#2a8fab"/><path d="M11 0v4h4" fill="#7fc1d4"/><path d="M2 3.5h2V14.5h9v2H2z" fill="#2a8fab"/></svg>
<div class="t" style="left:1158px;top:433px;font-size:13px;color:#333;font-weight:normal;">Duplicate Task</div>
<svg style="left:1126px;top:472px" width="18" height="18" viewBox="0 0 18 18"><g transform="rotate(-45 9 9)" fill="none" stroke="#2a8fab" stroke-width="2.7"><path d="M8.2 5.2H5a3.8 3.8 0 0 0 0 7.6h3.2"/><path d="M9.8 5.2H13a3.8 3.8 0 0 1 0 7.6H9.8"/><path d="M6.5 9h5"/></g></svg>
<div class="t" style="left:1158px;top:475px;font-size:13px;color:#333;font-weight:normal;">Copy Task Link</div>
<svg style="left:1126px;top:514px" width="18" height="18" viewBox="0 0 18 18"><path d="M1 7.5C1 6 2 5 3 4.3L8.5 1l5.5 3.3c1 .7 2 1.7 2 3.2V15c0 .8-.7 1.5-1.5 1.5h-12C1.7 16.5 1 15.8 1 15z" fill="#2a8fab"/><path d="M3.5 8.8l5 3.2 5-3.2" stroke="#fff" stroke-width="1.3" fill="none"/></svg>
<div class="t" style="left:1158px;top:517px;font-size:13px;color:#333;font-weight:normal;">Add Discussion by Email</div>
<svg style="left:1126px;top:556px" width="18" height="18" viewBox="0 0 18 18"><g fill="#2a8fab"><circle cx="1.3" cy="2" r="1.3"/><circle cx="1.3" cy="8" r="1.3"/><circle cx="1.3" cy="14" r="1.3"/><rect x="4" y="1" width="13" height="2" rx="1"/><rect x="4" y="7" width="13" height="2" rx="1"/><rect x="4" y="13" width="13" height="2" rx="1"/></g></svg>
<div class="t" style="left:1158px;top:559px;font-size:13px;color:#333;font-weight:normal;">History Log</div>
<svg style="left:1126px;top:593px" width="18" height="18" viewBox="0 0 18 18"><circle cx="9" cy="9" r="9" fill="#2a8fab"/><path d="M8.2 4v5.3l3.3 2.4" stroke="#fff" stroke-width="2" fill="none"/></svg>
<div class="t" style="left:1158px;top:594px;font-size:13px;color:#333;font-weight:normal;">Set an estimate</div>
<div class="t" style="left:1158px;top:607px;font-size:13px;color:#999;font-weight:normal;font-style:italic">312w 4d</div>
<svg style="left:1126px;top:640px" width="18" height="18" viewBox="0 0 18 18"><path d="M1 0h8l4 4v12H1z" fill="#2a8fab"/><path d="M9 0v4h4" fill="#bfe0ea"/><path d="M3 5h6M3 7.5h7M3 10h7M3 12.5h5" stroke="#fff" stroke-width="1"/><circle cx="13.5" cy="14.5" r="3.2" fill="#2a8fab" stroke="#fff" stroke-width="1"/><path d="M13.5 12.8v3.4M11.8 14.5h3.4" stroke="#fff" stroke-width="1"/></svg>
<div class="t" style="left:1158px;top:643px;font-size:13px;color:#333;font-weight:normal;">Add Dependency</div>
<svg style="left:1126px;top:682px" width="18" height="18" viewBox="0 0 18 18"><path d="M0 0h6L0 6z M18 0h-6l6 6z M0 18h6L0 12z M18 18h-6l6-6z" fill="#2a8fab"/><path d="M2 2l14 14M16 2L2 16" stroke="#2a8fab" stroke-width="2.6"/></svg>
<div class="t" style="left:1158px;top:685px;font-size:13px;color:#333;font-weight:normal;">View Full Screen</div>
<svg style="left:1126px;top:724px" width="18" height="18" viewBox="0 0 18 18"><g transform="translate(9 9)"><g fill="#2a8fab"><rect x="-2.2" y="-9" width="4.4" height="18" rx=".6"/><rect x="-2.2" y="-9" width="4.4" height="18" rx=".6" transform="rotate(60)"/><rect x="-2.2" y="-9" width="4.4" height="18" rx=".6" transform="rotate(120)"/><circle r="6.8"/></g><circle r="2.6" fill="#e6f1f7"/></g></svg>
<div class="t" style="left:1158px;top:727px;font-size:13px;color:#333;font-weight:normal;">Customize View</div>
<svg style="left:1126px;top:766px" width="18" height="18" viewBox="0 0 18 18"><rect x="0" y="0" width="18" height="3" fill="#2a8fab"/><path d="M1 4.5h16v7.5a5 5 0 0 0-5 5H1z" fill="#2a8fab"/><path d="M6 7.5h4" stroke="#fff" stroke-width="1.2"/><circle cx="14.5" cy="14" r="3.8" fill="#2a8fab" stroke="#fff" stroke-width="1"/><path d="M14.5 12v4M12.5 14h4" stroke="#fff" stroke-width="1.3"/></svg>
<div class="t" style="left:1158px;top:769px;font-size:13px;color:#333;font-weight:normal;">Archive Task</div>
<svg style="left:1126px;top:822px" width="18" height="18" viewBox="0 0 18 18"><path d="M2 2.2h12.5c.6 0 .6 1.6 0 1.6H2c-.6 0-.6-1.6 0-1.6z" fill="#d03a2a"/><path d="M6 1.2h4.5v1.5H6z" fill="#d03a2a"/><path d="M2.6 4.5h11.3l-1.2 11.5c-.1.8-.6 1.2-1.3 1.2H5.1c-.7 0-1.2-.4-1.3-1.2z" fill="#d03a2a"/></svg>
<div class="t" style="left:1158px;top:825px;font-size:13px;color:#333;font-weight:normal;">Delete Task</div>
<svg style="left:1296px;top:644px" width="5" height="9"><path d="M1 1l3 3.5L1 8" stroke="#6fb3c9" stroke-width="1.2" fill="none"/></svg>
<div class="t" style="left:1172px;top:114px;font-size:25px;color:#ff8b2b;font-weight:bold;">Action menu</div>
<div class="a" style="left:1281px;top:145px;width:44px;height:45px;border:5px solid #ff8b2b"></div>
<svg style="left:0;top:0" width="1326" height="897"><path d="M27.5 112h5.2v84.5h-5.2z" fill="#ff8b2b"/><path d="M30.2 90.5L42.8 114.5H17.8z" fill="#ff8b2b"/><path d="M959 730.5h118v5.2H959z" fill="#ff8b2b"/><path d="M1100.5 733L1076 720.3V745.5z" fill="#ff8b2b"/></svg>
</body></html>
